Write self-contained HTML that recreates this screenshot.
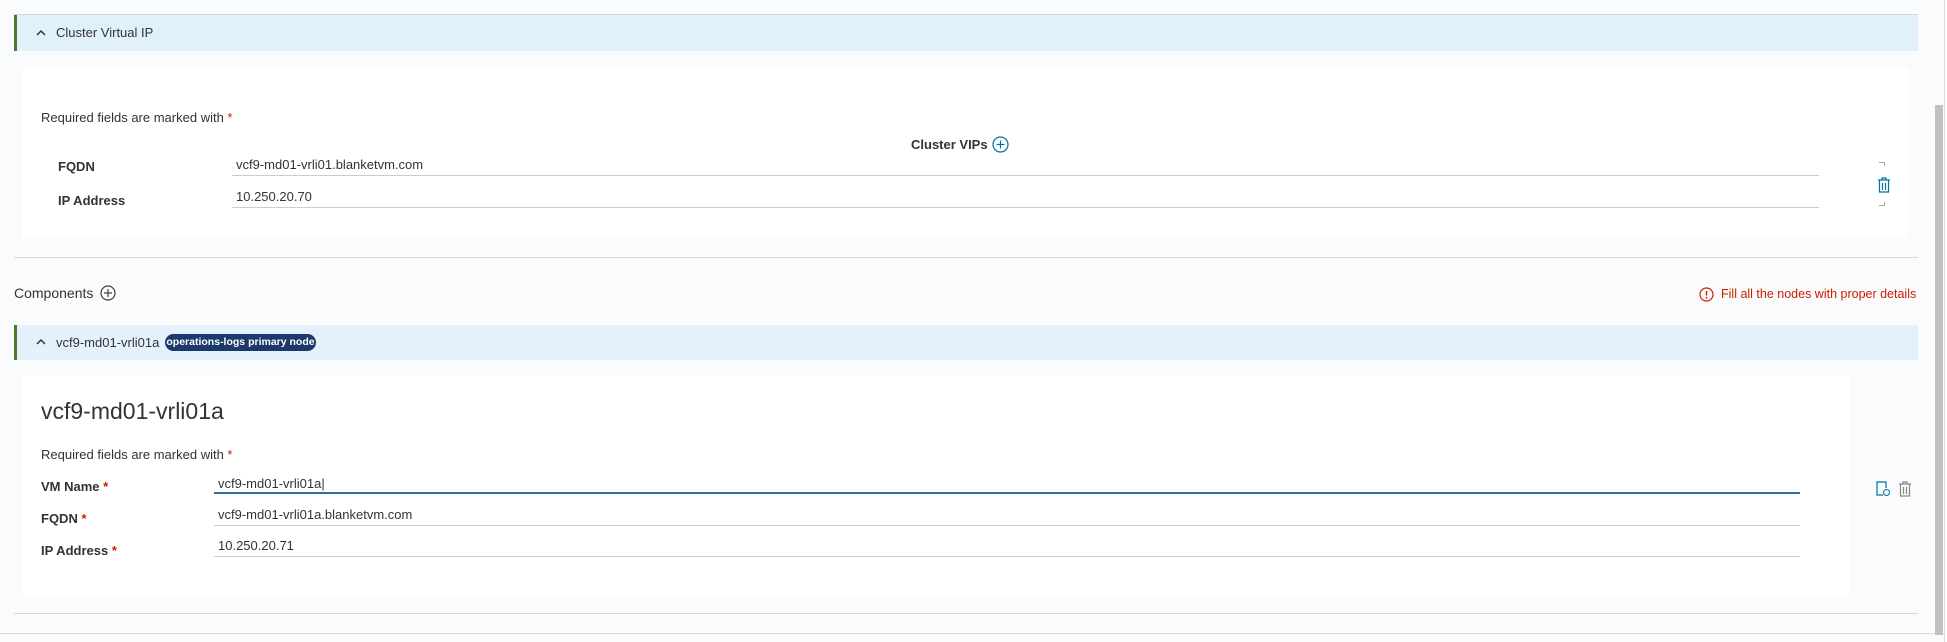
<!DOCTYPE html>
<html><head><meta charset="utf-8"><style>
*{margin:0;padding:0;box-sizing:border-box}
body{width:1947px;height:642px;background:#fafbfc;font-family:"Liberation Sans",sans-serif;color:#333;position:relative;overflow:hidden;font-size:13px}
.a{position:absolute}
.hdr{left:14px;width:1904px;background:#e1f1fb;border-left:3px solid #4a7a2a}
.card{background:#fff}
.lbl{font-weight:bold;font-size:13px;color:#333}
.val{font-size:13px;color:#333}
.ul{height:1px;background:#ccc}
.req{color:#c92100}
</style></head><body>
<div class="a" style="left:14px;top:14px;width:1904px;height:1px;background:#cfd6dc"></div>
<div class="a hdr" style="top:15px;height:36px"></div>
<svg class="a" style="left:36px;top:29px" width="10" height="8"><path d="M1 6 L5 2 L9 6" stroke="#333" stroke-width="1.5" fill="none"/></svg>
<div class="a" style="left:56px;top:25px;font-size:13px">Cluster Virtual IP</div>
<div class="a card" style="left:22px;top:68px;width:1886px;height:170px"></div>
<div class="a" style="left:41px;top:110px">Required fields are marked with <span class="req">*</span></div>
<div class="a lbl" style="left:911px;top:137px">Cluster VIPs</div>
<svg class="a" style="left:992px;top:136px" width="17" height="17"><circle cx="8.5" cy="8.5" r="7.5" stroke="#0072a3" fill="none" stroke-width="1.2"/><path d="M8.5 4.5v8M4.5 8.5h8" stroke="#0072a3" stroke-width="1.2"/></svg>
<div class="a lbl" style="left:58px;top:159px">FQDN</div>
<div class="a val" style="left:236px;top:157px">vcf9-md01-vrli01.blanketvm.com</div>
<div class="a ul" style="left:232px;top:175px;width:1587px"></div>
<div class="a lbl" style="left:58px;top:193px">IP Address</div>
<div class="a val" style="left:236px;top:189px">10.250.20.70</div>
<div class="a ul" style="left:232px;top:207px;width:1587px"></div>
<div class="a" style="left:1879px;top:162px;width:6px;height:4px;border-top:1px solid #aaa;border-right:1px solid #aaa"></div>
<div class="a" style="left:1879px;top:202px;width:6px;height:4px;border-bottom:1px solid #aaa;border-right:1px solid #aaa"></div>
<svg class="a" style="left:1877px;top:177px" width="14" height="16"><path d="M1 3h12M5 3V1h4v2M2.5 3v12h9V3M5.5 6v7M8.5 6v7" stroke="#0072a3" stroke-width="1.2" fill="none"/></svg>
<div class="a" style="left:14px;top:257px;width:1904px;height:1px;background:#d7d7d7"></div>
<div class="a" style="left:14px;top:285px;font-size:14px">Components</div>
<svg class="a" style="left:100px;top:285px" width="16" height="16"><circle cx="8" cy="8" r="7" stroke="#444" fill="none" stroke-width="1.2"/><path d="M8 4v8M4 8h8" stroke="#444" stroke-width="1.2"/></svg>
<svg class="a" style="left:1699px;top:287px" width="15" height="15"><circle cx="7.5" cy="7.5" r="6.5" stroke="#c92100" fill="none" stroke-width="1.2"/><path d="M7.5 4v4.5" stroke="#c92100" stroke-width="1.4"/><circle cx="7.5" cy="10.8" r=".9" fill="#c92100"/></svg>
<div class="a" style="left:1721px;top:287px;color:#c92100;font-size:12.5px">Fill all the nodes with proper details</div>
<div class="a hdr" style="top:325px;height:35px;background:#e4f1fc"></div>
<svg class="a" style="left:36px;top:338px" width="10" height="8"><path d="M1 6 L5 2 L9 6" stroke="#333" stroke-width="1.5" fill="none"/></svg>
<div class="a" style="left:56px;top:335px;font-size:13px">vcf9-md01-vrli01a</div>
<div class="a" style="left:165px;top:334px;width:151px;height:17px;background:#1b3a6b;color:#fff;border-radius:9px;font-size:10.5px;font-weight:bold;text-align:center;line-height:17px">operations-logs primary node</div>
<div class="a card" style="left:22px;top:376px;width:1828px;height:220px"></div>
<div class="a" style="left:41px;top:398px;font-size:23px;color:#333">vcf9-md01-vrli01a</div>
<div class="a" style="left:41px;top:447px">Required fields are marked with <span class="req">*</span></div>
<div class="a lbl" style="left:41px;top:479px">VM Name <span class="req">*</span></div>
<div class="a val" style="left:218px;top:476px">vcf9-md01-vrli01a|</div>
<div class="a" style="left:214px;top:492px;width:1586px;height:2px;background:#2f6ea5"></div>
<div class="a lbl" style="left:41px;top:511px">FQDN <span class="req">*</span></div>
<div class="a val" style="left:218px;top:507px">vcf9-md01-vrli01a.blanketvm.com</div>
<div class="a ul" style="left:214px;top:525px;width:1586px"></div>
<div class="a lbl" style="left:41px;top:543px">IP Address <span class="req">*</span></div>
<div class="a val" style="left:218px;top:538px">10.250.20.71</div>
<div class="a ul" style="left:214px;top:556px;width:1586px"></div>
<svg class="a" style="left:1875px;top:481px" width="16" height="16"><path d="M11 7V1H2v13h6" stroke="#0072a3" stroke-width="1.2" fill="none"/><circle cx="11.5" cy="11.5" r="3" stroke="#0072a3" fill="none"/></svg>
<svg class="a" style="left:1898px;top:481px" width="14" height="16"><path d="M1 3h12M5 3V1h4v2M2.5 3v12h9V3M5.5 6v7M8.5 6v7" stroke="#888" stroke-width="1.2" fill="none"/></svg>
<div class="a" style="left:14px;top:613px;width:1904px;height:1px;background:#d7d7d7"></div>
<div class="a" style="left:0;top:633px;width:1944px;height:1px;background:#ddd"></div>
<div class="a" style="left:1935px;top:105px;width:8px;height:530px;background:#c1c1c1"></div>
<div class="a" style="left:1944px;top:0;width:1px;height:642px;background:#ddd"></div>
</body></html>
